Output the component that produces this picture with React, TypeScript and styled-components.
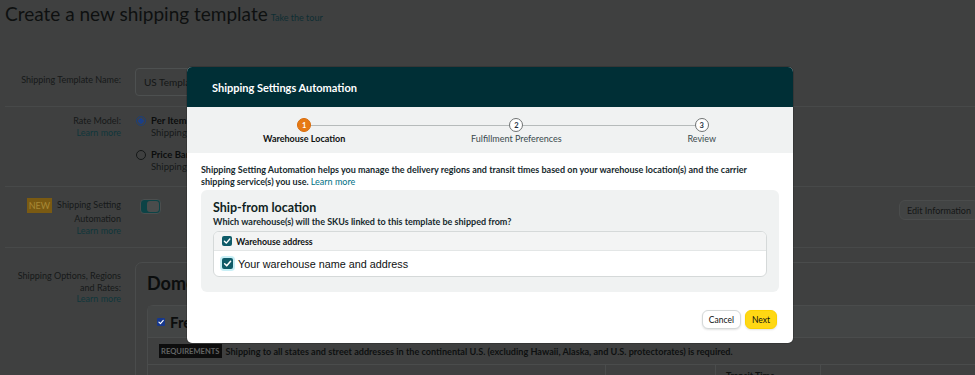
import React from 'react';
import styled, {createGlobalStyle} from 'styled-components';

const GlobalStyle = createGlobalStyle`
  html, body {
    margin: 0;
    padding: 0;
    background: #3f4040;
    overflow: hidden;
  }
  body {
    font-family: Lato, "Liberation Sans", Arial, sans-serif;
  }
  * {
    box-sizing: border-box;
  }
`;

const Check: React.FC<{size: number}> = ({size}) => (
    <svg width={size} height={size} viewBox="0 0 10 10">
        <path d="M2.4 5.2 L4.3 7.1 L7.8 3" fill="none" stroke="#fff" strokeWidth="1.4" strokeLinecap="round" strokeLinejoin="round"/>
    </svg>
);

export default function App() {
    return (
        <>
            <GlobalStyle/>
            <Page>
                {/* 배경 페이지 (dimmed) */}
                <Header>
                    <PageTitle>Create a new shipping template</PageTitle>
                    <TourLink>Take the tour</TourLink>
                </Header>

                <FormRow $pt={6} $pb={10}>
                    <Label $pt={6}>Shipping Template Name:</Label>
                    <NameInput>US Template</NameInput>
                </FormRow>

                <FormRow $pt={8} $pb={13}>
                    <Label>
                        Rate Model:
                        <LabelLink>Learn more</LabelLink>
                    </Label>
                    <Options>
                        <Option>
                            <Radio $checked/>
                            <div>
                                <OptionTitle>Per Item / Quantity Based</OptionTitle>
                                <OptionText>Shipping rates are calculated per item or per weight</OptionText>
                            </div>
                        </Option>
                        <Option>
                            <Radio/>
                            <div>
                                <OptionTitle>Price Banded</OptionTitle>
                                <OptionText>Shipping rates are based on the order total</OptionText>
                            </div>
                        </Option>
                    </Options>
                </FormRow>

                <FormRow $pt={12} $pb={11}>
                    <Label>
                        <NewBadge>NEW</NewBadge>
                        Shipping Setting<br/>Automation
                        <LabelLink>Learn more</LabelLink>
                    </Label>
                    <ToggleRow>
                        <Toggle><Knob/></Toggle>
                        <EditButton>Edit Information</EditButton>
                    </ToggleRow>
                </FormRow>

                <FormRow $pt={14} $pb={0} $noBorder>
                    <Label $pt={8}>
                        Shipping Options, Regions<br/>and Rates:
                        <LabelLink>Learn more</LabelLink>
                    </Label>
                    <Card>
                        <CardTitle>Domestic</CardTitle>
                        <OptionBox>
                            <OptionHead>
                                <BgCheck><Check size={8}/></BgCheck>
                                <OptionHeadTitle>Free Shipping</OptionHeadTitle>
                            </OptionHead>
                            <ReqRow>
                                <ReqBadge>REQUIREMENTS</ReqBadge>
                                <ReqText>Shipping to all states and street addresses in the continental U.S. (excluding Hawaii, Alaska, and U.S. protectorates) is required.</ReqText>
                            </ReqRow>
                            <ColumnsRow>
                                <Col $w={458}/>
                                <Col $w={110}/>
                                <Col $w={105}><ColHead>Transit Time</ColHead></Col>
                                <Col $w={160}/>
                            </ColumnsRow>
                        </OptionBox>
                    </Card>
                </FormRow>

                {/* 모달 */}
                <Modal>
                    <ModalHeader>Shipping Settings Automation</ModalHeader>
                    <Stepper>
                        <StepLine/>
                        <Step>
                            <StepCircle $active>1</StepCircle>
                            <StepLabel $active>Warehouse Location</StepLabel>
                        </Step>
                        <Step>
                            <StepCircle>2</StepCircle>
                            <StepLabel>Fulfillment Preferences</StepLabel>
                        </Step>
                        <Step>
                            <StepCircle>3</StepCircle>
                            <StepLabel>Review</StepLabel>
                        </Step>
                    </Stepper>

                    <ModalBody>
                        <Description>
                            Shipping Setting Automation helps you manage the delivery regions and transit times based on your warehouse location(s) and the carrier shipping service(s) you use. <ModalLink>Learn more</ModalLink>
                        </Description>

                        <ShipFromBox>
                            <BoxTitle>Ship-from location</BoxTitle>
                            <BoxQuestion>Which warehouse(s) will the SKUs linked to this template be shipped from?</BoxQuestion>
                            <Table>
                                <TableHead>
                                    <TealCheck $size={10}><Check size={10}/></TealCheck>
                                    <TableHeadText>Warehouse address</TableHeadText>
                                </TableHead>
                                <TableRow>
                                    <TealCheck $size={11} $focus><Check size={11}/></TealCheck>
                                    <RowText>Your warehouse name and address</RowText>
                                </TableRow>
                            </Table>
                        </ShipFromBox>
                    </ModalBody>

                    <ModalFooter>
                        <Button>Cancel</Button>
                        <Button $primary>Next</Button>
                    </ModalFooter>
                </Modal>
            </Page>
        </>
    );
}

// --------------------------------------
// 배경 페이지
// --------------------------------------

const Page = styled.div `
  position: relative;
  width: 975px;
  height: 375px;
  overflow: hidden;
  background: #3f4040;
  color: #0d0f0f;
`;

const Header = styled.div `
  display: flex;
  align-items: baseline;
  gap: 3px;
  height: 62px;
  padding: 1px 0 0 5px;
`;

const PageTitle = styled.h1 `
  margin: 0;
  font-size: 19px;
  line-height: 26px;
  font-weight: 400;
  color: #0e1010;
`;

const TourLink = styled.a `
  font-size: 9px;
  color: #0f2e33;
`;

const FormRow = styled.div<{$pt: number; $pb: number; $noBorder?: boolean}> `
  display: grid;
  grid-template-columns: 116px 1fr;
  column-gap: 14px;
  margin-left: 5px;
  padding: ${({$pt}) => $pt}px 0 ${({$pb}) => $pb}px;
  border-bottom: ${({$noBorder}) => ($noBorder ? 'none' : '1px solid #474949')};
`;

const Label = styled.div<{$pt?: number}> `
  padding-top: ${({$pt}) => $pt ?? 0}px;
  text-align: right;
  font-size: 9px;
  line-height: 11.5px;
  color: #161919;
`;

const LabelLink = styled.div `
  color: #10363b;
`;

const NameInput = styled.div `
  width: 320px;
  height: 28px;
  display: flex;
  align-items: center;
  padding: 0 8px;
  border: 1px solid #4d5050;
  border-radius: 4px;
  font-size: 10px;
  color: #141616;
`;

const Options = styled.div `
  display: flex;
  flex-direction: column;
  gap: 10px;
  padding-left: 1px;
`;

const Option = styled.div `
  display: flex;
  gap: 5px;
  font-size: 9.5px;
  line-height: 12px;
`;

const Radio = styled.span<{$checked?: boolean}> `
  width: 10px;
  height: 10px;
  margin-top: 1px;
  border-radius: 50%;
  border: 1px solid ${({$checked}) => ($checked ? '#1c3f78' : '#151818')};
  background: ${({$checked}) => ($checked ? 'radial-gradient(circle, #1b3f86 0 2.5px, #404141 3px)' : 'transparent')};
`;

const OptionTitle = styled.div `
  font-weight: 700;
  color: #0b0d0d;
`;

const OptionText = styled.div `
  color: #161919;
`;

const NewBadge = styled.span `
  display: inline-block;
  margin-right: 5px;
  padding: 2px 2px;
  background: #7a5a12;
  color: #a88936;
  font-size: 9px;
  line-height: 11px;
  vertical-align: top;
  margin-top: -1px;
`;

const ToggleRow = styled.div `
  display: flex;
  align-items: flex-start;
  padding-left: 5px;
  margin-right: -4px;
`;

const Toggle = styled.div `
  width: 21px;
  height: 15px;
  display: flex;
  justify-content: flex-end;
  padding: 1px;
  background: #0c4346;
  border: 1px solid #4b4e4e;
  border-radius: 4px;
`;

const Knob = styled.div `
  width: 12px;
  height: 11px;
  border-radius: 3px;
  background: #4a4c4c;
`;

const EditButton = styled.div `
  margin-left: auto;
  margin-top: 1px;
  height: 20px;
  display: flex;
  align-items: center;
  padding: 0 7px;
  border: 1px solid #4a4c4c;
  border-radius: 6px;
  background: #424444;
  font-size: 9px;
  color: #141616;
`;

const Card = styled.div `
  margin-right: -10px;
  padding: 9px 0 0 11px;
  border: 1px solid #4a4c4c;
  border-radius: 7px;
`;

const CardTitle = styled.div `
  font-size: 18px;
  line-height: 22px;
  font-weight: 700;
  color: #0b0d0d;
  margin-bottom: 11px;
`;

const OptionBox = styled.div `
  border: 1px solid #4a4c4c;
  border-right: none;
  border-radius: 6px 0 0 0;
`;

const OptionHead = styled.div `
  height: 32px;
  display: flex;
  align-items: center;
  gap: 5px;
  padding-left: 9px;
  background: #434545;
  border-bottom: 1px solid #4a4c4c;
`;

const BgCheck = styled.span `
  width: 8px;
  height: 8px;
  display: flex;
  align-items: center;
  justify-content: center;
  background: #17388c;
  border-radius: 1px;
`;

const OptionHeadTitle = styled.span `
  font-size: 15px;
  font-weight: 700;
  color: #0b0d0d;
`;

const ReqRow = styled.div `
  height: 27px;
  display: flex;
  align-items: center;
  gap: 4px;
  padding-left: 11px;
  border-bottom: 1px solid #4a4c4c;
`;

const ReqBadge = styled.span `
  padding: 2px 2px;
  background: #0d0d0d;
  color: #626464;
  font-size: 7.6px;
  font-weight: 700;
`;

const ReqText = styled.span `
  font-size: 9.1px;
  font-weight: 700;
  color: #0e1010;
`;

const ColumnsRow = styled.div `
  display: flex;
  height: 20px;
`;

const Col = styled.div<{$w: number}> `
  width: ${({$w}) => $w}px;
  flex-shrink: 0;
  border-right: 1px solid #4a4c4c;
  padding: 5px 10px;
`;

const ColHead = styled.div `
  font-size: 9px;
  font-weight: 700;
  color: #0e1010;
`;

// --------------------------------------
// 모달
// --------------------------------------

const Modal = styled.div `
  position: absolute;
  left: 187px;
  top: 67px;
  width: 606px;
  height: 276px;
  display: flex;
  flex-direction: column;
  background: #fff;
  border-radius: 5px;
  overflow: hidden;
  box-shadow: 0 0 0 1px rgba(0, 0, 0, 0.15);
`;

const ModalHeader = styled.div `
  height: 40px;
  flex-shrink: 0;
  display: flex;
  align-items: center;
  padding-left: 25px;
  background: #002f36;
  color: #fff;
  font-size: 11px;
  font-weight: 700;
`;

const Stepper = styled.div `
  position: relative;
  height: 46px;
  flex-shrink: 0;
  display: flex;
  justify-content: space-between;
  align-items: flex-start;
  padding: 11px 77px 0 76px;
  background: #f0f2f2;
`;

const StepLine = styled.div `
  position: absolute;
  top: 18px;
  left: 117px;
  right: 91px;
  height: 1px;
  background: #b6bbbb;
`;

const Step = styled.div `
  position: relative;
  display: flex;
  flex-direction: column;
  align-items: center;
  gap: 2px;
`;

const StepCircle = styled.div<{$active?: boolean}> `
  width: 14px;
  height: 14px;
  display: flex;
  align-items: center;
  justify-content: center;
  border-radius: 50%;
  border: 1px solid ${({$active}) => ($active ? '#d86b0b' : '#6f7373')};
  background: ${({$active}) => ($active ? '#e67a14' : '#fff')};
  color: ${({$active}) => ($active ? '#fff' : '#232f3e')};
  font-size: 7.5px;
  font-weight: 700;
`;

const StepLabel = styled.div<{$active?: boolean}> `
  font-size: 9px;
  line-height: 10px;
  font-weight: ${({$active}) => ($active ? 700 : 400)};
  color: ${({$active}) => ($active ? '#0f1111' : '#3a4a4d')};
`;

const ModalBody = styled.div `
  padding: 11px 14px 0;
`;

const Description = styled.p `
  margin: 0 0 2px;
  font-size: 9px;
  line-height: 12px;
  font-weight: 700;
  color: #16292d;
`;

const ModalLink = styled.a `
  color: #007185;
  font-weight: 400;
`;

const ShipFromBox = styled.div `
  height: 102px;
  padding: 9px 12px 0;
  background: #f0f2f2;
  border-radius: 6px;
`;

const BoxTitle = styled.div `
  font-size: 12.5px;
  line-height: 17px;
  font-weight: 700;
  color: #0f1f22;
`;

const BoxQuestion = styled.div `
  font-size: 9px;
  line-height: 11px;
  font-weight: 700;
  color: #16292d;
  margin-bottom: 4px;
`;

const Table = styled.div `
  border: 1px solid #d5d9d9;
  border-radius: 6px;
  overflow: hidden;
  background: #fff;
`;

const TableHead = styled.div `
  height: 19px;
  display: flex;
  align-items: center;
  gap: 4px;
  padding-left: 8px;
  background: #f3f4f4;
  border-bottom: 1px solid #e3e6e6;
`;

const TealCheck = styled.span<{$size: number; $focus?: boolean}> `
  width: ${({$size}) => $size}px;
  height: ${({$size}) => $size}px;
  display: flex;
  align-items: center;
  justify-content: center;
  background: #0e5b68;
  border-radius: 2px;
  box-shadow: ${({$focus}) => ($focus ? '0 0 0 2px #c7eef5' : 'none')};
`;

const TableHeadText = styled.span `
  font-size: 8.8px;
  font-weight: 700;
  color: #0f1111;
`;

const TableRow = styled.div `
  height: 25px;
  display: flex;
  align-items: center;
  gap: 5px;
  padding-left: 8px;
`;

const RowText = styled.span `
  font-family: "Liberation Sans", Arial, sans-serif;
  font-size: 10.8px;
  color: #0f1111;
`;

const ModalFooter = styled.div `
  display: flex;
  justify-content: flex-end;
  gap: 4px;
  padding: 18px 16px 0;
`;

const Button = styled.div<{$primary?: boolean}> `
  height: 19px;
  display: flex;
  align-items: center;
  padding: 0 6px;
  border-radius: 6px;
  border: 1px solid ${({$primary}) => ($primary ? '#fcd200' : '#d5d9d9')};
  background: ${({$primary}) => ($primary ? '#ffd814' : '#fff')};
  box-shadow: 0 1px 2px rgba(15, 17, 17, 0.12);
  font-size: 8.5px;
  color: #0f1111;
`;
